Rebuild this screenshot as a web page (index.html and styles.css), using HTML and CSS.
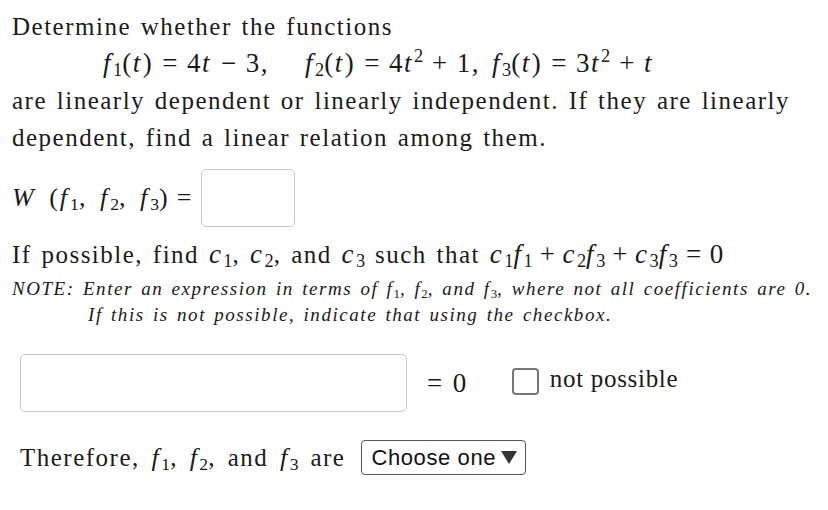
FILE: index.html
```html
<!DOCTYPE html>
<html>
<head>
<meta charset="utf-8">
<link rel="stylesheet" href="styles.css">
</head>
<body>
<div class="page">
  <div class="para">
    <div class="line">Determine whether the functions</div>
    <div class="line display"><span class="m"><i>f</i><sub>1</sub>(<i>t</i>)<span class="rel">=</span>4<i>t</i><span class="bin">&minus;</span>3,<span class="qq"></span><i>f</i><sub>2</sub>(<i>t</i>)<span class="rel">=</span>4<i>t</i><sup>2</sup><span class="bin">+</span>1,<span class="q"></span><i>f</i><sub>3</sub>(<i>t</i>)<span class="rel">=</span>3<i>t</i><sup>2</sup><span class="bin">+</span><i>t</i></span></div>
    <div class="line">are linearly dependent or linearly independent. If they are linearly</div>
    <div class="line">dependent, find a linear relation among them.</div>
  </div>

  <div class="wrow">
    <span class="m"><i>W</i> (<i>f</i><sub>1</sub>, <i>f</i><sub>2</sub>, <i>f</i><sub>3</sub>)<span class="rel">=</span></span>
    <span class="box small"></span>
  </div>

  <div class="line possible">If possible, find <span class="m"><i>c</i><sub>1</sub></span>, <span class="m"><i>c</i><sub>2</sub></span>, and <span class="m"><i>c</i><sub>3</sub></span> such that <span class="m"><i>c</i><sub>1</sub><i>f</i><sub>1</sub><span class="bin">+</span><i>c</i><sub>2</sub><i>f</i><sub>3</sub><span class="bin">+</span><i>c</i><sub>3</sub><i>f</i><sub>3</sub><span class="rel">=</span>0</span></div>
  <div class="note">
    <div class="nline">NOTE: Enter an expression in terms of f<sub>1</sub>, f<sub>2</sub>, and f<sub>3</sub>, where not all coefficients are 0.</div>
    <div class="nline indent">If this is not possible, indicate that using the checkbox.</div>
  </div>

  <div class="arow">
    <span class="box wide"></span>
    <span class="m eq0"><span class="rel">=</span>0</span>
    <span class="check"></span>
    <span class="np">not possible</span>
  </div>

  <div class="trow">
    <span class="ttext">Therefore, <span class="m"><i>f</i><sub>1</sub></span>, <span class="m"><i>f</i><sub>2</sub></span>, and <span class="m"><i>f</i><sub>3</sub></span> are</span>
    <span class="select">Choose one<span class="tri"></span></span>
  </div>
</div>
</body>
</html>
```

FILE: styles.css
```css
html, body {
  margin: 0;
  padding: 0;
  background: #fff;
}
.page {
  padding: 8px 12px 0 12px;
  font-family: "Liberation Serif", "Times New Roman", serif;
  font-size: 25px;
  color: #1a1a1a;
}
.line {
  line-height: 37px;
  white-space: nowrap;
  letter-spacing: 1.5px;
  word-spacing: 2px;
}
.m {
  font-size: 27px;
  letter-spacing: 1.5px;
  word-spacing: 3px;
}
.m i { padding-right: 1px; }
sub, sup {
  font-size: 0.68em;
  line-height: 0;
  letter-spacing: 0;
  font-style: normal;
}
sub { vertical-align: -0.22em; }
sup { vertical-align: 0.55em; }
.rel { margin: 0 8px 0 9px; }
.bin { margin: 0 8px 0 9px; }
.display {
  padding-left: 91px;
}
.qq { display: inline-block; width: 36px; }
.q { display: inline-block; width: 12px; }
.wrow {
  display: flex;
  align-items: center;
  gap: 2px;
  margin-top: 13px;
}
.wrow .m { font-size: 26px; letter-spacing: 2px; word-spacing: 4px; }
.wrow .rel { margin: 0 6px 0 7px; }
.box {
  display: inline-block;
  border: 1px solid #c8c8c8;
  border-radius: 5px;
  background: #fff;
  box-sizing: border-box;
}
.small { width: 94px; height: 58px; }
.wide { width: 387px; height: 58px; }
.possible { margin-top: 9px; }
.possible .bin { margin: 0 6px 0 7px; }
.possible .rel { margin: 0 7px 0 8px; }
.note {
  font-style: italic;
  font-size: 19px;
  letter-spacing: 1.55px;
  word-spacing: 2px;
  white-space: nowrap;
  margin-top: 3px;
}
.nline { line-height: 26px; }
.indent { padding-left: 76px; }
.arow {
  display: flex;
  align-items: center;
  margin-top: 26px;
  padding-left: 8px;
}
.eq0 { margin-left: 11px; }
.eq0 .rel { margin: 0 9px 0 9px; }
.check {
  display: inline-block;
  width: 27px;
  height: 27px;
  border: 2px solid #767676;
  border-radius: 4px;
  box-sizing: border-box;
  margin-left: 44px;
  position: relative;
  top: -2px;
}
.np { margin-left: 11px; position: relative; top: -4px; letter-spacing: 0.7px; }
.trow {
  display: flex;
  align-items: center;
  margin-top: 28px;
  padding-left: 8px;
}
.ttext { letter-spacing: 1.5px; word-spacing: 4px; white-space: nowrap; }
.ttext .m { font-size: 26px; }
.select {
  display: inline-flex;
  align-items: center;
  margin-left: 16px;
  height: 35px;
  box-sizing: border-box;
  border: 1px solid #555;
  border-radius: 4px;
  padding: 0 8px 0 9px;
  font-family: "Liberation Sans", Arial, sans-serif;
  font-size: 22px;
  letter-spacing: 0.6px;
  color: #111;
}
.tri {
  display: inline-block;
  width: 0;
  height: 0;
  border-left: 8px solid transparent;
  border-right: 8px solid transparent;
  border-top: 13px solid #333;
  margin-left: 5px;
}
```
